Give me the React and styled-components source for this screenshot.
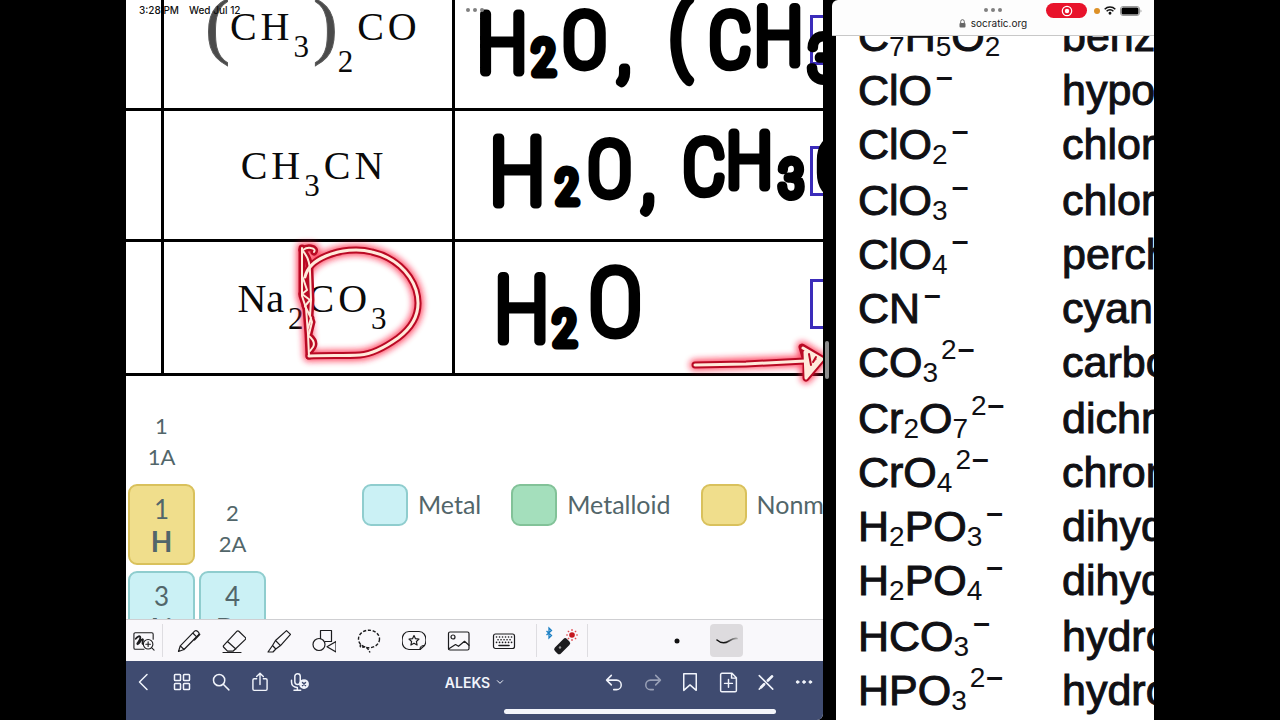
import React from 'react';
import styled, { createGlobalStyle } from 'styled-components';

const GlobalStyle = createGlobalStyle`
  * { box-sizing: border-box; }
  body { margin: 0; background: #000; font-family: Inter, sans-serif; }
  button { border: 0; padding: 0; background: none; color: inherit; font: inherit; }
  svg { display: block; }
`

const Device = styled.div`
  position: relative;
  display: flex;
  height: 100vh;
  overflow: hidden;
  padding: 0 126px;
  background: #000;
`

const NotesPane = styled.main`
  position: relative;
  flex: 697 1 0;
  min-width: 0;
  display: flex;
  flex-direction: column;
  overflow: hidden;
  background: #fff;
  border-bottom-right-radius: 6px;
`

const Divider = styled.div`
  flex: 0 0 9px;
  display: flex;
  align-items: center;
  padding-left: 2px;
`

const Handle = styled.span`
  width: 4px;
  height: 38px;
  border-radius: 2px;
  background: #8c8c8c;
`

const BrowserPane = styled.section`
  flex: 322 1 0;
  min-width: 0;
  display: flex;
  flex-direction: column;
  overflow: hidden;
`

const StatusBar = styled.div`
  position: absolute;
  top: 0;
  left: 13px;
  right: 0;
  display: flex;
  gap: 10px;
  font-size: 10px;
  font-weight: 500;
  line-height: 20px;
  color: #111;
`

const PaneDots = styled.span`
  position: absolute;
  top: 8px;
  left: 50%;
  display: flex;
  gap: 3px;
  transform: translateX(-50%);

  i {
    width: 4px;
    height: 4px;
    border-radius: 50%;
    background: #808080;
  }
`

const Page = styled.div`
  position: relative;
  flex: 1;
  min-height: 0;
  overflow: hidden;
`

const Ink = styled.svg`
  position: absolute;
  top: 0;
  left: 0;
  pointer-events: none;

  text {
    font-family: 'Roboto Condensed', Roboto, sans-serif;
    font-weight: 100;
    fill: #000;
    stroke: #000;
    stroke-width: 9px;
    stroke-linejoin: round;
    stroke-linecap: round;
  }
`

const Worksheet = styled.table`
  table-layout: fixed;
  width: 900px;
  border-collapse: separate;
  border-spacing: 0;

  tr { height: 131px; }
  tr:first-child { height: 111px; }
  tr:last-child { height: 134px; }
`

const Cell = styled.td`
  padding: ${props => props.$top}px 0 0 ${props => props.$left || 0}px;
  vertical-align: top;
  text-align: ${props => props.$center ? 'center' : 'left'};
  border-bottom: 3px solid #000;
  border-right: 3px solid #000;
`

const Formula = styled.div`
  font-family: 'Liberation Serif', serif;
  font-size: 40px;
  line-height: 40px;
  white-space: nowrap;
  color: #0a0a0a;
`

const Atom = styled.span`
  margin-right: 4px;
`

const Count = styled.sub`
  margin-right: 4px;
  font-size: 31px;
  line-height: 0;
  vertical-align: ${props => props.$low ? -32 : -17}px;
`

const Paren = styled.span`
  font-size: 74px;
  line-height: 0;
  vertical-align: -10px;
  color: #4a4a4a;
  -webkit-text-stroke: 1px #5a5a5a;
`

const Answer = styled.input`
  display: block;
  width: 60px;
  height: 50px;
  border: 3px solid #3b2cba;
  background: #fff;
`

const Elements = styled.div`
  display: flex;
  align-items: flex-start;
  padding: 34px 0 0 2px;
  font-family: Lato, sans-serif;
  color: #52666a;
`

const Groups = styled.div`
  display: flex;
  align-items: flex-end;
  gap: 4px;
`

const Group = styled.div`
  display: flex;
  flex-direction: column;
  gap: 6px;
`

const GroupName = styled.div`
  padding-bottom: 6px;
  font-size: 22px;
  line-height: 31px;
  text-align: center;
`

const tones = {
  metal: ['#cbf1f5', '#8fcdce'],
  metalloid: ['#a4dfbc', '#82c298'],
  nonmetal: ['#f0de8c', '#d9c15c']
}

const Element = styled.div`
  width: 67px;
  height: 81px;
  padding-top: 8px;
  border: 2px solid ${props => tones[props.$kind][1]};
  border-radius: 9px;
  background: ${props => tones[props.$kind][0]};
  font-size: 26px;
  line-height: 30px;
  text-align: center;

  b { display: block; font-size: 28px; line-height: 34px; }
`

const Legend = styled.div`
  display: flex;
  gap: 30px;
  margin: 74px 0 0 96px;
`

const LegendItem = styled.div`
  display: flex;
  gap: 10px;
  font-size: 25px;
  line-height: 40px;
  white-space: nowrap;
`

const Swatch = styled.span`
  width: 46px;
  height: 42px;
  border: 2px solid ${props => tones[props.$kind][1]};
  border-radius: 9px;
  background: ${props => tones[props.$kind][0]};
`

const Toolbar = styled.div`
  flex: none;
  display: flex;
  align-items: center;
  height: 42px;
  border-top: 1px solid #cfcfd2;
  background: #f9f8fb;
  color: #1c1c1e;
`

const Tool = styled.button`
  flex: none;
  display: flex;
  align-items: center;
  justify-content: center;
  width: ${props => props.$width || 45}px;
  height: 33px;
`

const Separator = styled.span`
  width: 1px;
  height: 33px;
  margin: 0 ${props => props.$after || 0}px 0 ${props => props.$before || 0}px;
  background: #dedde1;
`

const Pens = styled.div`
  flex: 1;
  display: flex;
  justify-content: flex-end;
  gap: 17px;
  padding-right: 80px;
`

const Pen = styled(Tool)`
  border-radius: 4px;
  background: ${props => props.$active ? '#dddbde' : 'none'};
`

const NavBar = styled.nav`
  flex: none;
  display: grid;
  grid-template-columns: 1fr auto 1fr;
  align-items: start;
  height: 59px;
  padding-top: 2px;
  background: #3f4b70;
  color: #f1f4fb;
`

const NavGroup = styled.div`
  display: flex;
  gap: ${props => props.$end ? 0 : 1}px;
  justify-content: ${props => props.$end ? 'flex-end' : 'flex-start'};
`

const NavButton = styled.button`
  display: flex;
  align-items: center;
  justify-content: center;
  width: ${props => props.$width || 38}px;
  height: 38px;
  opacity: ${props => props.disabled ? 0.5 : 1};
  color: inherit;
`

const Title = styled.button`
  display: flex;
  align-items: center;
  gap: 6px;
  height: 38px;
  font-size: 14px;
  font-weight: 600;
`

const HomeIndicator = styled.span`
  position: absolute;
  left: 50%;
  bottom: 6px;
  width: 272px;
  height: 5px;
  margin-left: -136px;
  border-radius: 3px;
  background: #f3f5fb;
`

const AddressBar = styled.header`
  position: relative;
  flex: none;
  height: 36px;
  border-bottom: 1px solid #c8c8c8;
  border-top-left-radius: 6px;
  background: #fdfdfd;
`

const Address = styled.div`
  display: flex;
  align-items: center;
  justify-content: center;
  gap: 5px;
  padding-top: 13px;
  font-size: 10px;
  line-height: 20px;
  color: #1a1a1a;
`

const Indicators = styled.div`
  position: absolute;
  top: 3px;
  right: 12px;
  display: flex;
  align-items: center;
  gap: 4px;
`

const RecordPill = styled.span`
  display: flex;
  align-items: center;
  justify-content: center;
  width: 41px;
  height: 15px;
  margin-right: 3px;
  border-radius: 8px;
  background: #e8132b;
`

const MicDot = styled.span`
  width: 6px;
  height: 6px;
  border-radius: 50%;
  background: #dd9127;
`

const IonView = styled.div`
  flex: 1;
  min-height: 0;
  overflow: hidden;
  border-left: 4px solid #000;
  background: #fff;
`

const IonTable = styled.table`
  table-layout: fixed;
  width: 900px;
  margin-top: -27px;
  border-collapse: collapse;
  font-family: 'Liberation Sans', sans-serif;
  font-size: 43px;
  line-height: 54px;
  color: #101014;
  -webkit-text-stroke: 1px #101014;

  tr { height: 54px; }
  tr:nth-child(4n) { height: 56px; }
  td { padding: 0; vertical-align: bottom; white-space: nowrap; }
  td:first-child { width: 226px; padding-left: 22px; }

  sub, sup { font-size: 28px; line-height: 0; -webkit-text-stroke: 0; }
  sub { vertical-align: -5px; }
  sup { vertical-align: 18px; margin-left: 3px; }
  sup b { margin-left: 1px; font-size: 30px; }
`

const ions = [
  ['C7H5O2', '–', 'benzoate'],
  ['ClO', '–', 'hypochlorite'],
  ['ClO2', '–', 'chlorite'],
  ['ClO3', '–', 'chlorate'],
  ['ClO4', '–', 'perchlorate'],
  ['CN', '–', 'cyanide'],
  ['CO3', '2–', 'carbonate'],
  ['Cr2O7', '2–', 'dichromate'],
  ['CrO4', '2–', 'chromate'],
  ['H2PO3', '–', 'dihydrogen phosphite'],
  ['H2PO4', '–', 'dihydrogen phosphate'],
  ['HCO3', '–', 'hydrogen carbonate'],
  ['HPO3', '2–', 'hydrogen phosphite'],
  ['HPO4', '2–', 'hydrogen phosphate']
]

// Splits "H2PO3" so that the digits can be set as subscripts
const Ion = ({ formula, charge }) => (
  <>
    {formula.split(/(\d)/).filter(Boolean).map((part, i) =>
      /\d/.test(part) ? <sub key={i}>{part}</sub> : part
    )}
    <sup>{charge.replace('–', '')}<b>–</b></sup>
  </>
)

const Icon = ({ size = 24, width = 1.2, children }) => (
  <svg width={size} height={size} viewBox="0 0 24 24" fill="none" stroke="currentColor"
    strokeWidth={width} strokeLinecap="round" strokeLinejoin="round" aria-hidden="true">
    {children}
  </svg>
)

const tools = [
  ['Pen', <><path d="M1.5 22.5l1.8-5.7L17.6 2.2a2 2 0 0 1 2.8 0l1 1a2 2 0 0 1 0 2.8L7 20.5zM3.3 16.8L7 20.5M15.8 4l3.8 3.800" /><path d="M22.500 5.500l-5 5.200" strokeWidth="1.800" /></>],
  ['Eraser', <path d="M2 16.2L15 2.2a1.3 1.3 0 0 1 1.8 0l6.6 6.4a1.3 1.3 0 0 1 0 1.8L11 22.2H5.5L1.5 18a1.3 1.3 0 0 1 .5-1.8zM5.5 12.5l8.3 7.5M1 23.500h18" />],
  ['Highlighter', <path d="M8.5 11.5L19.5 1.6l4 3.8L13.5 16.6zM8.5 11.5l-3 5 3.3 3.5 4.7-3.4M5.5 16.5L1 23h5l2.8-3" />],
  ['Shapes', <><path d="M8.5 9.600V1.500h11v11H13" /><circle cx="7" cy="15.500" r="6" /><path d="M24 12.500v10.500l-9-5.200z" /></>],
  ['Lasso', <g strokeLinecap="butt" strokeWidth="1.400"><ellipse cx="12" cy="10" rx="10.500" ry="8.800" strokeDasharray="3.200 1.700" /><path d="M4 15.500c-2 2 0 3.500 2.500 2.500s4.500 1.500 6.500 5.500" strokeDasharray="3 1.500" /></g>],
  ['Sticker', <><path d="M7 2.5h10c4.5 0 7 4 7 8.5 0 2-.4 3.8-1.500 5.500L18 20.500H7c-4.500 0-7-4-7-9s2.500-9 7-9z" /><path d="M18 20.500c0-3 .8-4 4.500-4M12 6.500l1.500 3.200 3.500.4-2.600 2.400.7 3.500-3.100-1.800-3.100 1.800.7-3.500L7 10.100l3.500-.4z" /></>],
  ['Image', <><rect x="1.500" y="3" width="20.500" height="18" rx="1.500" /><circle cx="6" cy="8" r="2" /><path d="M1.500 20l7-4.500 3 1.800 6-5 4.500 4" /></>],
  ['Keyboard', <><rect x="1.500" y="5" width="21" height="14.500" rx="2" /><path d="M7 16.500h10M4.500 8h.1M7.500 8h.1M10.500 8h.1M13.500 8h.1M16.500 8h.1M19.500 8h.1M6 10.700h.1M9 10.700h.1M12 10.700h.1M15 10.700h.1M18 10.700h.1M4.500 13.400h.1M7.500 13.400h.1M10.500 13.400h.1M13.500 13.400h.1M16.500 13.400h.1M19.500 13.400h.1" strokeWidth="1.600" /></>]
]

const circlePath = 'M179 277C181 268 188 261 200 256C214 250 232 248 246 252C268 257 284 272 290 290C296 310 288 326 272 338C258 348 246 354 234 355C218 356 200 355 183 356'
const spinePath = 'M176 248L176 278L176 296L180 308L182 334L183 356M177 250Q181 247 185 248Q190 249 188 252'
const scribblePath = 'M176 250Q184 258 184 272L185 300L184 316L186 322L183 334M177 278L181 290L176 294L184 300L179 306L185 318L182 328M183 336Q190 342 187 347L184 351'

const App = () => (
  <>
    <GlobalStyle />
    <Device>
      <NotesPane>
        <Page>
          <Worksheet>
            <colgroup><col width="38" /><col width="291" /><col /></colgroup>
            <tbody>
              <tr>
                <Cell $top={0} />
                <Cell $top={7} $left={10} $center>
                  <Formula>
                    <Paren>(</Paren><Atom>C</Atom><Atom>H</Atom><Count>3</Count><Paren>)</Paren>
                    <Count $low>2</Count><Atom>C</Atom><Atom>O</Atom>
                  </Formula>
                </Cell>
                <Cell $top={15} $left={355}><Answer aria-label="Acetone species" /></Cell>
              </tr>
              <tr>
                <Cell $top={0} />
                <Cell $top={35} $left={12} $center>
                  <Formula><Atom>C</Atom><Atom>H</Atom><Count>3</Count><Atom>C</Atom><Atom>N</Atom></Formula>
                </Cell>
                <Cell $top={35} $left={355}><Answer aria-label="Acetonitrile species" /></Cell>
              </tr>
              <tr>
                <Cell $top={0} />
                <Cell $top={37} $left={12} $center>
                  <Formula><Atom>Na</Atom><Count>2</Count><Atom>C</Atom><Atom>O</Atom><Count>3</Count></Formula>
                </Cell>
                <Cell $top={37} $left={355}><Answer aria-label="Sodium carbonate species" /></Cell>
              </tr>
            </tbody>
          </Worksheet>

          <Elements>
            <Groups>
              <Group>
                <GroupName>1<br />1A</GroupName>
                <Element $kind="nonmetal">1<b>H</b></Element>
                <Element $kind="metal">3<b>Li</b></Element>
              </Group>
              <Group>
                <GroupName>2<br />2A</GroupName>
                <Element $kind="metal">4<b>Be</b></Element>
              </Group>
            </Groups>
            <Legend>
              <LegendItem><Swatch $kind="metal" />Metal</LegendItem>
              <LegendItem><Swatch $kind="metalloid" />Metalloid</LegendItem>
              <LegendItem><Swatch $kind="nonmetal" />Nonmetal</LegendItem>
            </Legend>
          </Elements>

          <Ink width="697" height="619" viewBox="0 0 697 619">
            <defs>
              <filter id="glow" x="-20%" y="-50%" width="140%" height="200%">
                <feGaussianBlur stdDeviation="3" />
              </filter>
            </defs>
            <text fontSize="82">
              <tspan x="351" y="72">H</tspan>
              <tspan x="406" y="74" fontSize="48">2</tspan>
              <tspan x="437" y="66" fontSize="74">O</tspan>
              <tspan x="491" y="74" fontSize="74">,</tspan>
              <tspan x="543" y="63">(</tspan>
              <tspan x="583" y="66" fontSize="74">C</tspan>
              <tspan x="628" y="64" fontSize="80">H</tspan>
              <tspan x="682" y="80" fontSize="62">3</tspan>
            </text>
            <text fontSize="92">
              <tspan x="363" y="204">H</tspan>
              <tspan x="430" y="203" fontSize="46">2</tspan>
              <tspan x="462" y="195" fontSize="74">O</tspan>
              <tspan x="515" y="203" fontSize="76">,</tspan>
              <tspan x="557" y="193" fontSize="74">C</tspan>
              <tspan x="600" y="187" fontSize="76">H</tspan>
              <tspan x="653" y="196" fontSize="50">3</tspan>
              <tspan x="690" y="193" fontSize="74">C</tspan>
            </text>
            <text fontSize="90">
              <tspan x="368" y="341">H</tspan>
              <tspan x="427" y="345" fontSize="48">2</tspan>
              <tspan x="463" y="334">O</tspan>
            </text>
            <g fill="none" strokeLinecap="round" strokeLinejoin="round">
              <g stroke="#ff1238" strokeWidth="11" filter="url(#glow)" opacity="0.75">
                <path d={circlePath} />
                <path d={spinePath} />
                <path d="M569 365L679 361M676 347L696 359L680 378L679 361Z" />
              </g>
              <g stroke="#b90a24" strokeWidth="7">
                <path d={circlePath} />
                <path d={spinePath} />
                <path d={scribblePath} />
                <path d="M569 365L620 364L679 361M676 347L696 359L680 378L680 361Z" />
              </g>
              <g stroke="#ffeadb" strokeWidth="3">
                <path d={circlePath} />
                <path d={spinePath} strokeWidth="2" />
                <path d={scribblePath} strokeWidth="2" />
                <path d="M569 365L620 364L679 361" />
                <path d="M677 348L696 359L680 378L679 352L688 356L682 371L692 360" fill="#ffeadb" />
              </g>
              <path d="M683 354L685 365M690 357L687 362" stroke="#b90a24" strokeWidth="2" />
            </g>
          </Ink>
        </Page>

        <StatusBar><span>3:28 PM</span><span>Wed Jul 12</span></StatusBar>
        <PaneDots><i /><i /><i /></PaneDots>

        <Toolbar>
          <Tool $width={36} aria-label="Zoom window">
            <Icon size={22}>
              <path d="M12 21H2.500A1.500 1.500 0 0 1 1 19.500v-15A1.500 1.500 0 0 1 2.500 3h18A1.500 1.500 0 0 1 22 4.500V10" />
              <path d="M3 9.500C5 7 8 5.500 8 8.500S3.500 15 5 15.500s4-6 5.500-5.500-1 4 0 5" strokeWidth="2" />
              <circle cx="16.500" cy="15.500" r="5.200" /><path d="M20.500 19.500L23 22M14 15.500h5M16.500 13v5" />
            </Icon>
          </Tool>
          <Separator $after={3} />
          {tools.map(([name, drawing]) => (
            <Tool key={name} aria-label={name}><Icon>{drawing}</Icon></Tool>
          ))}
          <Separator $before={10} />
          <Tool $width={50} aria-label="Laser pointer">
            <svg width="34" height="30" viewBox="0 0 34 30" aria-hidden="true">
              <path d="M1.500 5l5 4.500L4 12V2l2.500 2.500-5 4.500" fill="none" stroke="#1b7fc4" strokeWidth="1.300" />
              <rect x="8.500" y="16" width="17" height="8.500" rx="2.500" transform="rotate(-45 17 20)" fill="#1c1c1e" />
              <circle cx="15" cy="21.500" r="1.200" fill="#999" />
              <circle cx="27" cy="9" r="2.800" fill="#c4171f" />
              <path d="M27 3v2M27 13v2M21 9h2M31 9h2M22.800 4.800l1.400 1.400M29.800 11.800l1.400 1.400M31.200 4.800l-1.400 1.400M24.200 11.800l-1.400 1.400" stroke="#e0464c" strokeWidth="1.200" />
            </svg>
          </Tool>
          <Separator />
          <Pens>
            <Pen $width={33} aria-label="Dot">
              <svg width="6" height="6"><circle cx="3" cy="3" r="2.500" fill="#111" /></svg>
            </Pen>
            <Pen $width={33} $active aria-label="Stroke">
              <svg width="22" height="10" viewBox="0 0 22 10">
                <defs>
                  <linearGradient id="fade"><stop offset="0.400" stopColor="#111" /><stop offset="1" stopColor="#aaa" /></linearGradient>
                </defs>
                <path d="M1 4C5 7.500 9 7.500 13 5S18 2 21 2.500" fill="none" stroke="url(#fade)" strokeWidth="1.600" strokeLinecap="round" />
              </svg>
            </Pen>
          </Pens>
        </Toolbar>

        <NavBar>
          <NavGroup>
            <NavButton $width={36} aria-label="Back"><Icon size={18} width={2}><path d="M16 2L6 12l10 10" /></Icon></NavButton>
            <NavButton aria-label="Pages">
              <Icon size={18} width={2}>
                <rect x="2" y="2" width="8" height="8" rx="1" /><rect x="14" y="2" width="8" height="8" rx="1" />
                <rect x="2" y="14" width="8" height="8" rx="1" /><rect x="14" y="14" width="8" height="8" rx="1" />
              </Icon>
            </NavButton>
            <NavButton aria-label="Search"><Icon size={18} width={2}><circle cx="9.500" cy="9.500" r="7.500" /><path d="M15 15l7.500 7.500" /></Icon></NavButton>
            <NavButton aria-label="Share"><Icon size={20} width={1.700}><path d="M8 8H5a1.500 1.500 0 0 0-1.500 1.500v11A1.500 1.500 0 0 0 5 22h14a1.500 1.500 0 0 0 1.500-1.500v-11A1.500 1.500 0 0 0 19 8h-3M12 15V2M8 5.500L12 1.500l4 4" /></Icon></NavButton>
            <NavButton aria-label="Microphone off">
              <Icon size={20} width={1.800}>
                <rect x="7" y="2" width="6.500" height="13" rx="3.200" /><path d="M3 10v2c0 4 3 6.500 7 6.500v3.500M6 22h8" />
                <circle cx="18" cy="14.500" r="5" fill="currentColor" /><path d="M16.200 12.700l3.600 3.600M19.800 12.700l-3.600 3.600" stroke="#3f4b70" />
              </Icon>
            </NavButton>
          </NavGroup>
          <Title>ALEKS<Icon size={8} width={3}><path d="M4 8l8 8 8-8" /></Icon></Title>
          <NavGroup $end>
            <NavButton aria-label="Undo"><Icon size={19} width={1.900}><path d="M8 3L2 9l6 6M2 9h12.500a6 6 0 0 1 0 12H11" /></Icon></NavButton>
            <NavButton aria-label="Redo" disabled><Icon size={19} width={1.900}><path d="M16 3l6 6-6 6M22 9H9.500a6 6 0 0 0 0 12H13" /></Icon></NavButton>
            <NavButton aria-label="Bookmark"><Icon size={20} width={1.800}><path d="M4.500 2h15v20L12 15.500 4.500 22z" /></Icon></NavButton>
            <NavButton aria-label="Add page"><Icon size={21} width={1.700}><path d="M16 1.500H4.500A1.500 1.500 0 0 0 3 3v18a1.500 1.500 0 0 0 1.500 1.500h15A1.500 1.500 0 0 0 21 21V6.500zM15.500 2v5H21M7.500 13h9M12 8.500v9" /></Icon></NavButton>
            <NavButton aria-label="Read only"><Icon size={18} width={2}><path d="M3 3.500l18 18M3 21.500l6-6M14.500 10L20 4.500" /><path d="M14.500 10L20 4.500M5.500 19l4-4" strokeWidth="3.500" /></Icon></NavButton>
            <NavButton aria-label="More"><Icon size={18}><g fill="currentColor"><circle cx="3.500" cy="12" r="1.800" /><circle cx="12" cy="12" r="1.800" /><circle cx="20.500" cy="12" r="1.800" /></g></Icon></NavButton>
          </NavGroup>
        </NavBar>
      </NotesPane>

      <Divider><Handle /></Divider>

      <BrowserPane>
        <AddressBar>
          <PaneDots><i /><i /><i /></PaneDots>
          <Address>
            <svg width="7" height="9" viewBox="0 0 7 9" aria-hidden="true">
              <rect x="0.500" y="4" width="6" height="4.500" rx="1" fill="#666" />
              <path d="M1.700 4V2.500a1.800 1.800 0 0 1 3.600 0V4" fill="none" stroke="#666" />
            </svg>
            socratic.org
          </Address>
          <Indicators>
            <RecordPill>
              <svg width="12" height="12" viewBox="0 0 12 12"><circle cx="6" cy="6" r="4.700" fill="none" stroke="#fff" strokeWidth="1.200" /><circle cx="6" cy="6" r="2.200" fill="#fff" /></svg>
            </RecordPill>
            <MicDot />
            <svg width="12" height="9" viewBox="0 0 12 9" fill="none" stroke="#111" strokeWidth="1.500">
              <path d="M0.700 3.200a7.500 7.500 0 0 1 10.600 0M2.600 5.200a4.800 4.800 0 0 1 6.800 0" />
              <circle cx="6" cy="7.300" r="0.700" fill="#111" />
            </svg>
            <svg width="22" height="10" viewBox="0 0 22 10">
              <rect x="0.500" y="0.500" width="19" height="9" rx="2.500" fill="none" stroke="#999" />
              <rect x="1.500" y="1.500" width="17" height="7" rx="1.500" fill="#000" />
              <path d="M20.500 3.500v3c1.300-.5 1.300-2.500 0-3z" fill="#999" />
            </svg>
          </Indicators>
        </AddressBar>
        <IonView>
          <IonTable>
            <tbody>
              {ions.map(([formula, charge, name]) => (
                <tr key={formula}>
                  <td><Ion formula={formula} charge={charge} /></td>
                  <td>{name}</td>
                </tr>
              ))}
            </tbody>
          </IonTable>
        </IonView>
      </BrowserPane>

      <HomeIndicator />
    </Device>
  </>
)

export default App;
